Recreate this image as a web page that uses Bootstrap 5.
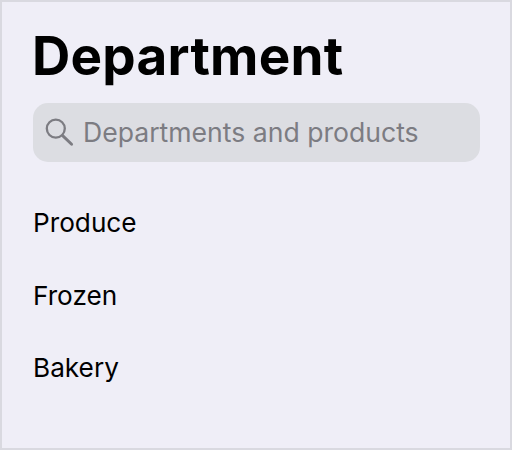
<!doctype html>
<html lang="en"><head><meta charset="utf-8">
<link href="https://cdn.jsdelivr.net/npm/bootstrap@5.3.0/dist/css/bootstrap.min.css" rel="stylesheet">
<style>
html,body{height:100%;margin:0}
body{background:#d4d4d8;font-family:Inter,"Liberation Sans",sans-serif}
.screen{height:450px;background:#efeef7;border:2px solid #d9d9e0;padding:0 31px}
.ttl{font-family:Inter,sans-serif;font-weight:700;font-size:53px;line-height:60px;letter-spacing:.25px;margin:24px 0 0 -1px;color:#000}
.searchbar{height:59px;width:447px;margin-top:17px;background:#dcdde2;border-radius:15px;padding-left:12px;gap:9px;color:#7c7c82;font-size:26.6px}
.dept{list-style:none;padding:0;margin:25px 0 0}
.dept li{font-size:26.2px;height:72.5px;line-height:72.5px;color:#000;margin-top:0}
</style></head><body>
<div class="screen">
<h1 class="ttl">Department</h1>
<div class="searchbar d-flex align-items-center">
<svg width="29" height="29" viewBox="0 0 29 29" fill="none" stroke="#7c7c82" stroke-width="2.3" stroke-linecap="round"><circle cx="10.8" cy="10.6" r="9"/><path d="M17.6 17.6l9 8.6" stroke-width="2.9"/></svg>
<span>Departments and products</span>
</div>
<ul class="dept">
<li>Produce</li><li>Frozen</li><li>Bakery</li>
</ul>
</div>
<script src="https://cdn.jsdelivr.net/npm/bootstrap@5.3.0/dist/js/bootstrap.bundle.min.js"></script>
</body></html>
